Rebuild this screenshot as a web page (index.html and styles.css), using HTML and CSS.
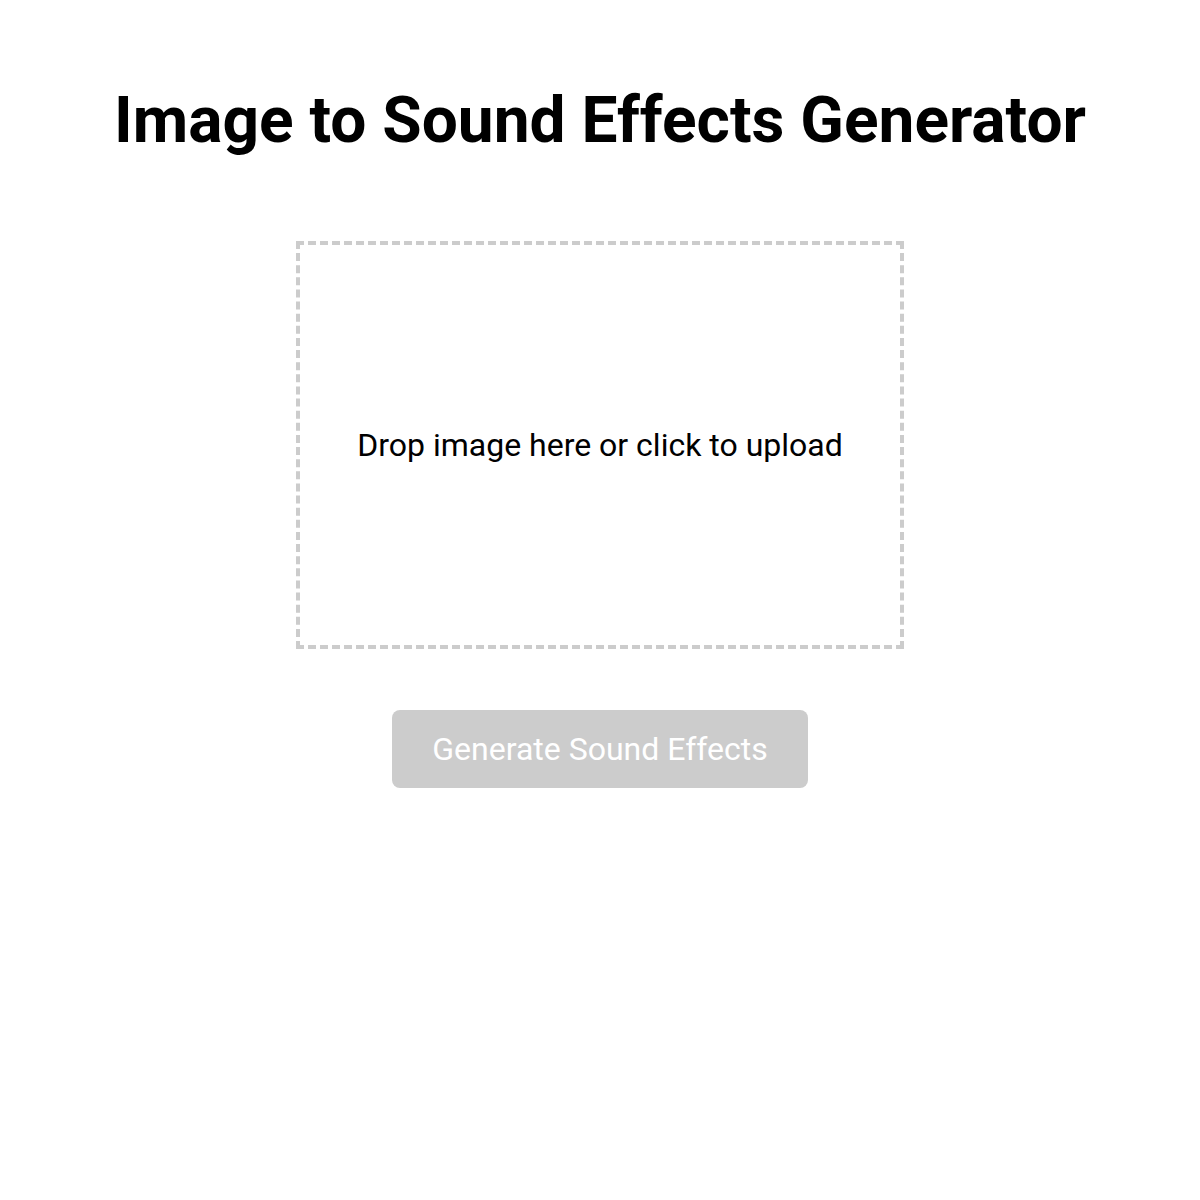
FILE: index.html
```html
<!DOCTYPE html>
<html lang="en">
<head>
    <meta charset="UTF-8">
    <meta name="viewport" content="width=device-width, initial-scale=1.0">
    <title>Image to Sound Effects Generator</title>
    <link rel="stylesheet" href="styles.css">
</head>
<body>
    <div class="container">
        <h1>Image to Sound Effects Generator</h1>

        <div class="drop-zone" id="dropZone">
            <span class="drop-text">Drop image here or click to upload</span>
        </div>

        <button class="btn-generate" id="generateBtn" disabled>Generate Sound Effects</button>
    </div>
</body>
</html>
```

FILE: styles.css
```css
* {
    margin: 0;
    padding: 0;
    box-sizing: border-box;
    font-family: Roboto, 'Liberation Sans', sans-serif;
}

body {
    background-color: #fff;
    color: #000;
}

.container {
    display: flex;
    flex-direction: column;
    align-items: center;
    padding: 83px 20px 40px;
}

h1 {
    font-size: 64px;
    font-weight: bold;
    text-align: center;
    margin-bottom: 83px;
}

.drop-zone {
    width: 608px;
    height: 408px;
    border: 4px dashed #ccc;
    display: flex;
    justify-content: center;
    align-items: center;
    cursor: pointer;
}

.drop-text {
    font-size: 32px;
}

.btn-generate {
    margin-top: 61px;
    width: 416px;
    height: 78px;
    border: none;
    border-radius: 8px;
    background-color: #ccc;
    color: #fff;
    font-size: 32px;
    cursor: not-allowed;
}
```
